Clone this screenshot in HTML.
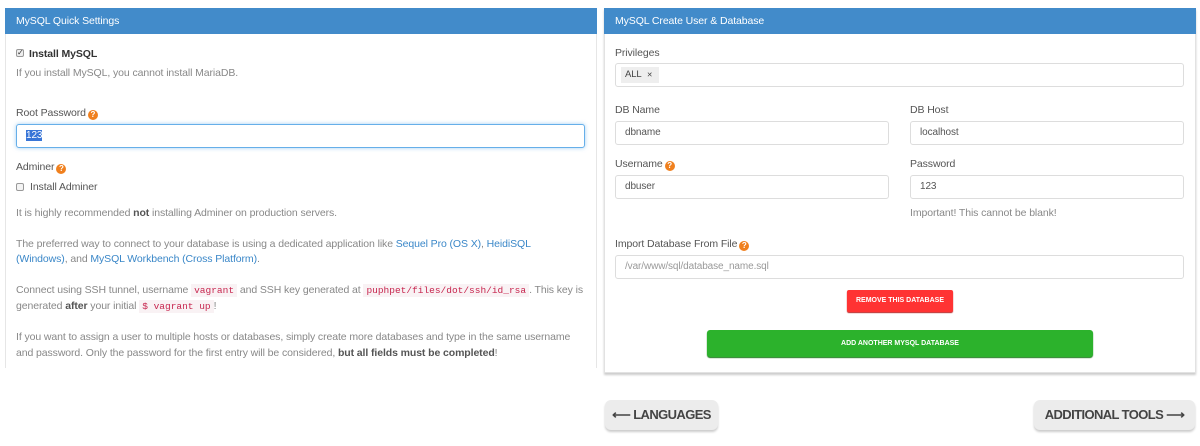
<!DOCTYPE html>
<html><head><meta charset="utf-8"><style>
*{margin:0;padding:0;box-sizing:border-box}
body{width:1200px;height:446px;background:#fff;font-family:"Liberation Sans",sans-serif;font-size:10.5px;color:#888;position:relative;overflow:hidden;letter-spacing:-0.1px}
.a{position:absolute;white-space:nowrap;line-height:14px;margin-top:1px}
.hd{position:absolute;top:8px;height:26px;background:#428bca;color:#fff;font-size:10.5px;line-height:26px;padding-left:11px}
.lbl{color:#555}
.inp{position:absolute;height:24px;border:1px solid #ddd;border-radius:3px;background:#fff;color:#555;padding-left:9px;line-height:22px;font-size:10px;white-space:nowrap}
.q{display:inline-block;width:10px;height:10px;border-radius:50%;background:#f0801e;color:#fff;font-size:8px;line-height:10px;text-align:center;font-weight:bold;vertical-align:-1px;margin-left:2px;letter-spacing:0}
.cb{position:absolute;width:8px;height:8px;border:1px solid #999;border-radius:2px;background:#f4f4f4}
a{color:#3a87c8;text-decoration:none}
b{color:#555}
code{font-family:"Liberation Mono",monospace;font-size:9.5px;color:#c7254e;background:#f9f2f4;padding:1px 3px;letter-spacing:0}
.nav{position:absolute;top:400px;height:30px;background:#ececec;border-radius:6px;box-shadow:0 2px 2px #ccc;color:#444;font-weight:bold;font-size:13px;line-height:30px;text-align:center;letter-spacing:-0.6px}
</style></head><body>
<div style="position:absolute;left:5px;top:8px;width:592px;height:360px;border-left:1px solid #e6e6e6;border-right:1px solid #e6e6e6"></div>
<div class="hd" style="left:5px;width:592px">MySQL Quick Settings</div>
<div class="cb" style="left:16px;top:49px;background:#eee;font-size:8px;line-height:6px;color:#333">✓</div>
<div class="a" style="left:29px;top:46px;color:#333;font-weight:bold">Install MySQL</div>
<div class="a" style="left:16px;top:65px">If you install MySQL, you cannot install MariaDB.</div>
<div class="a lbl" style="left:16px;top:105px">Root Password<span class="q">?</span></div>
<div class="inp" style="left:16px;top:124px;width:569px;border-color:#66afe9;box-shadow:0 0 4px rgba(102,175,233,.6)"><span style="background:#3875d7;color:#fff">123</span></div>
<div class="a lbl" style="left:16px;top:159px">Adminer<span class="q">?</span></div>
<div class="cb" style="left:16px;top:183px"></div>
<div class="a lbl" style="left:30px;top:179px">Install Adminer</div>
<div class="a" style="left:16px;top:205px">It is highly recommended <b>not</b> installing Adminer on production servers.</div>
<div class="a" style="left:16px;top:236px">The preferred way to connect to your database is using a dedicated application like <a>Sequel Pro (OS X)</a>, <a>HeidiSQL</a></div>
<div class="a" style="left:16px;top:251px"><a>(Windows)</a>, and <a>MySQL Workbench (Cross Platform)</a>.</div>
<div class="a" style="left:16px;top:282px">Connect using SSH tunnel, username <code>vagrant</code> and SSH key generated at <code>puphpet/files/dot/ssh/id_rsa</code>. This key is</div>
<div class="a" style="left:16px;top:298px">generated <b>after</b> your initial <code>$ vagrant up</code>!</div>
<div class="a" style="left:16px;top:329px">If you want to assign a user to multiple hosts or databases, simply create more databases and type in the same username</div>
<div class="a" style="left:16px;top:345px">and password. Only the password for the first entry will be considered, <b>but all fields must be completed</b>!</div>
<div style="position:absolute;left:604px;top:8px;width:592px;height:365px;border:1px solid #e2e2e2;border-top:none;box-shadow:0 2px 2px #ccc"></div>
<div class="hd" style="left:604px;width:592px">MySQL Create User &amp; Database</div>
<div class="a lbl" style="left:615px;top:45px">Privileges</div>
<div class="inp" style="left:615px;top:63px;width:569px;padding-left:5px;padding-top:3px"><span style="display:block;width:38px;height:16px;background:#eee;line-height:16px;padding-left:4px;color:#444;font-size:9.5px;white-space:nowrap">ALL <span style="font-size:7px;margin-left:3px">✕</span></span></div>
<div class="a lbl" style="left:615px;top:102px">DB Name</div>
<div class="a lbl" style="left:910px;top:102px">DB Host</div>
<div class="inp" style="left:615px;top:121px;width:274px">dbname</div>
<div class="inp" style="left:910px;top:121px;width:274px">localhost</div>
<div class="a lbl" style="left:615px;top:156px">Username<span class="q">?</span></div>
<div class="a lbl" style="left:910px;top:156px">Password</div>
<div class="inp" style="left:615px;top:175px;width:274px">dbuser</div>
<div class="inp" style="left:910px;top:175px;width:274px">123</div>
<div class="a" style="left:910px;top:205px">Important! This cannot be blank!</div>
<div class="a lbl" style="left:615px;top:236px">Import Database From File<span class="q">?</span></div>
<div class="inp" style="left:615px;top:255px;width:569px;color:#999">/var/www/sql/database_name.sql</div>
<div style="position:absolute;left:847px;top:290px;width:106px;height:22px;background:#f33;border-radius:2px;box-shadow:0 1px 1px #b22;color:#fff;font-weight:bold;font-size:7px;line-height:22px;text-align:center;letter-spacing:0">REMOVE THIS DATABASE</div>
<div style="position:absolute;left:707px;top:330px;width:386px;height:27px;background:#2cb22c;border-radius:3px;box-shadow:0 1px 1px #1a7a1a;color:#fff;font-weight:bold;font-size:7px;line-height:27px;text-align:center;letter-spacing:0">ADD ANOTHER MYSQL DATABASE</div>
<div class="nav" style="left:605px;width:113px">⟵ LANGUAGES</div>
<div class="nav" style="left:1034px;width:161px">ADDITIONAL TOOLS ⟶</div>
</body></html>
